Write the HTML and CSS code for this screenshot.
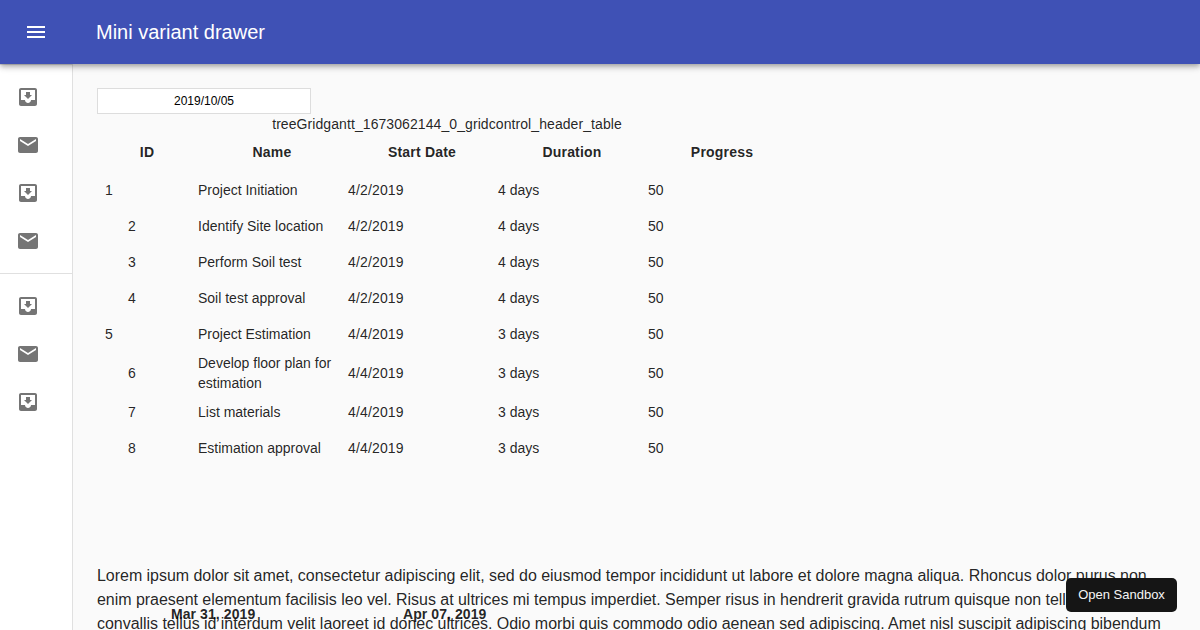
FILE: index.html
```html
<!DOCTYPE html>
<html lang="en">
<head>
<meta charset="utf-8">
<title>Mini variant drawer</title>
<link rel="stylesheet" href="styles.css">
</head>
<body>
<div class="app">
  <header class="appbar">
    <button class="menu-btn" aria-label="Open drawer">
      <svg class="icon" viewBox="0 0 24 24"><path d="M3 18h18v-2H3v2zm0-5h18v-2H3v2zm0-7v2h18V6H3z"/></svg>
    </button>
    <h1 class="title">Mini variant drawer</h1>
  </header>
  <div class="below">
    <nav class="drawer">
      <div class="toolbar-rule"></div>
      <ul class="nav-list">
        <li><svg class="icon" viewBox="0 0 24 24"><path d="M19 3H4.99c-1.11 0-1.98.89-1.98 2L3 19c0 1.1.88 2 1.99 2H19c1.1 0 2-.9 2-2V5c0-1.11-.9-2-2-2zm0 12h-4c0 1.66-1.35 3-3 3s-3-1.34-3-3H4.99V5H19v10zm-3-5h-2V7h-4v3H8l4 4 4-4z"/></svg></li>
        <li><svg class="icon" viewBox="0 0 24 24"><path d="M20 4H4c-1.1 0-1.99.9-1.99 2L2 18c0 1.1.9 2 2 2h16c1.1 0 2-.9 2-2V6c0-1.1-.9-2-2-2zm0 4l-8 5-8-5V6l8 5 8-5v2z"/></svg></li>
        <li><svg class="icon" viewBox="0 0 24 24"><path d="M19 3H4.99c-1.11 0-1.98.89-1.98 2L3 19c0 1.1.88 2 1.99 2H19c1.1 0 2-.9 2-2V5c0-1.11-.9-2-2-2zm0 12h-4c0 1.66-1.35 3-3 3s-3-1.34-3-3H4.99V5H19v10zm-3-5h-2V7h-4v3H8l4 4 4-4z"/></svg></li>
        <li><svg class="icon" viewBox="0 0 24 24"><path d="M20 4H4c-1.1 0-1.99.9-1.99 2L2 18c0 1.1.9 2 2 2h16c1.1 0 2-.9 2-2V6c0-1.1-.9-2-2-2zm0 4l-8 5-8-5V6l8 5 8-5v2z"/></svg></li>
      </ul>
      <div class="rule"></div>
      <ul class="nav-list">
        <li><svg class="icon" viewBox="0 0 24 24"><path d="M19 3H4.99c-1.11 0-1.98.89-1.98 2L3 19c0 1.1.88 2 1.99 2H19c1.1 0 2-.9 2-2V5c0-1.11-.9-2-2-2zm0 12h-4c0 1.66-1.35 3-3 3s-3-1.34-3-3H4.99V5H19v10zm-3-5h-2V7h-4v3H8l4 4 4-4z"/></svg></li>
        <li><svg class="icon" viewBox="0 0 24 24"><path d="M20 4H4c-1.1 0-1.99.9-1.99 2L2 18c0 1.1.9 2 2 2h16c1.1 0 2-.9 2-2V6c0-1.1-.9-2-2-2zm0 4l-8 5-8-5V6l8 5 8-5v2z"/></svg></li>
        <li><svg class="icon" viewBox="0 0 24 24"><path d="M19 3H4.99c-1.11 0-1.98.89-1.98 2L3 19c0 1.1.88 2 1.99 2H19c1.1 0 2-.9 2-2V5c0-1.11-.9-2-2-2zm0 12h-4c0 1.66-1.35 3-3 3s-3-1.34-3-3H4.99V5H19v10zm-3-5h-2V7h-4v3H8l4 4 4-4z"/></svg></li>
      </ul>
    </nav>
    <main class="content">
      <input class="date-input" type="text" value="2019/10/05" aria-label="Date">
      <div class="gantt">
        <table class="grid">
          <caption>treeGridgantt_1673062144_0_gridcontrol_header_table</caption>
          <colgroup><col class="col-id"><col class="col-data"><col class="col-data"><col class="col-data"><col class="col-data"></colgroup>
          <thead>
            <tr><th>ID</th><th>Name</th><th>Start Date</th><th>Duration</th><th>Progress</th></tr>
          </thead>
          <tbody>
            <tr><td class="id-parent">1</td><td>Project Initiation</td><td class="date">4/2/2019</td><td>4 days</td><td>50</td></tr>
            <tr><td class="id-child">2</td><td>Identify Site location</td><td class="date">4/2/2019</td><td>4 days</td><td>50</td></tr>
            <tr><td class="id-child">3</td><td>Perform Soil test</td><td class="date">4/2/2019</td><td>4 days</td><td>50</td></tr>
            <tr><td class="id-child">4</td><td>Soil test approval</td><td class="date">4/2/2019</td><td>4 days</td><td>50</td></tr>
            <tr><td class="id-parent">5</td><td>Project Estimation</td><td class="date">4/4/2019</td><td>3 days</td><td>50</td></tr>
            <tr class="tall"><td class="id-child">6</td><td>Develop floor plan for estimation</td><td class="date">4/4/2019</td><td>3 days</td><td>50</td></tr>
            <tr><td class="id-child">7</td><td>List materials</td><td class="date">4/4/2019</td><td>3 days</td><td>50</td></tr>
            <tr><td class="id-child">8</td><td>Estimation approval</td><td class="date">4/4/2019</td><td>3 days</td><td>50</td></tr>
          </tbody>
        </table>
      </div>
      <div class="lorem-wrap">
        <p class="lorem">Lorem ipsum dolor sit amet, consectetur adipiscing elit, sed do eiusmod tempor incididunt ut labore et dolore magna aliqua. Rhoncus dolor purus non enim praesent elementum facilisis leo vel. Risus at ultrices mi tempus imperdiet. Semper risus in hendrerit gravida rutrum quisque non tellus. Convallis convallis tellus id interdum velit laoreet id donec ultrices. Odio morbi quis commodo odio aenean sed adipiscing. Amet nisl suscipit adipiscing bibendum est ultricies integer quis.</p>
        <span class="week week-a">Mar 31, 2019</span>
        <span class="week week-b">Apr 07, 2019</span>
      </div>
    </main>
  </div>
  <a class="sandbox" href="#">Open Sandbox</a>
</div>
</body>
</html>
```
FILE: styles.css
```css
* { box-sizing: border-box; }
html, body { margin: 0; height: 100%; overflow: hidden; }
body {
  background: #fafafa;
  color: rgba(0, 0, 0, 0.87);
  font-family: "Liberation Sans", Arial, sans-serif;
}
.app { position: relative; height: 630px; overflow: hidden; display: flex; flex-direction: column; }
.appbar {
  position: relative;
  z-index: 2;
  flex: none;
  height: 64px;
  display: flex;
  align-items: center;
  padding-left: 12px;
  background: #3f51b5;
  color: #fff;
  box-shadow: 0 2px 4px -1px rgba(0,0,0,.2), 0 4px 5px 0 rgba(0,0,0,.14), 0 1px 10px 0 rgba(0,0,0,.12);
}
.menu-btn {
  width: 48px;
  height: 48px;
  margin-right: 36px;
  padding: 12px;
  border: 0;
  background: none;
  color: inherit;
}
.icon { display: block; width: 24px; height: 24px; fill: currentColor; }
.title { margin: 0; font: 400 20px/1.6 "Liberation Sans", Arial, sans-serif; }
.below { flex: 1; display: flex; min-height: 0; }
.drawer { flex: none; width: 73px; background: #fff; border-right: 1px solid #e0e0e0; }
.toolbar-rule, .rule { height: 1px; background: #e0e0e0; }
.nav-list { list-style: none; margin: 0; padding: 8px 0; color: #757575; }
.nav-list li { height: 48px; padding: 12px 16px; }
.content { flex: 1; min-width: 0; padding: 24px; }
.date-input {
  display: block;
  width: 214px;
  height: 26px;
  margin: 0 0 2px;
  padding: 0 2px;
  border: 1px solid #ddd;
  background: #fff;
  color: #000;
  font: 12px "Liberation Sans", Arial, sans-serif;
  text-align: center;
}
.gantt { height: 448px; }
.grid { width: 700px; table-layout: fixed; border-collapse: collapse; font-size: 14px; line-height: 20px; }
.grid caption { height: 16px; line-height: 16px; text-align: center; letter-spacing: .08px; }
.col-id { width: 100px; }
.col-data { width: 150px; }
.grid th { height: 40px; padding: 0; text-align: center; letter-spacing: .2px; }
.grid td { height: 36px; padding: 1px; }
.grid .tall td { height: 42px; }
.grid .date { letter-spacing: .15px; }
.grid .id-parent { padding-left: 8px; }
.grid .id-child { padding-left: 31px; }
.lorem-wrap { position: relative; }
.week { position: absolute; top: 40px; font-size: 14px; font-weight: 700; line-height: 20px; letter-spacing: .08px; }
.week-a { left: 74px; }
.week-b { left: 306px; }
.lorem { margin: 0; font-size: 16px; line-height: 24px; letter-spacing: -.035px; }
.sandbox {
  position: absolute;
  left: 1066px;
  top: 578px;
  width: 111px;
  height: 34px;
  border-radius: 5px;
  background: #151515;
  color: #f5f5f5;
  font: 13px/34px "Liberation Sans", Arial, sans-serif;
  text-align: center;
  text-decoration: none;
}
```
